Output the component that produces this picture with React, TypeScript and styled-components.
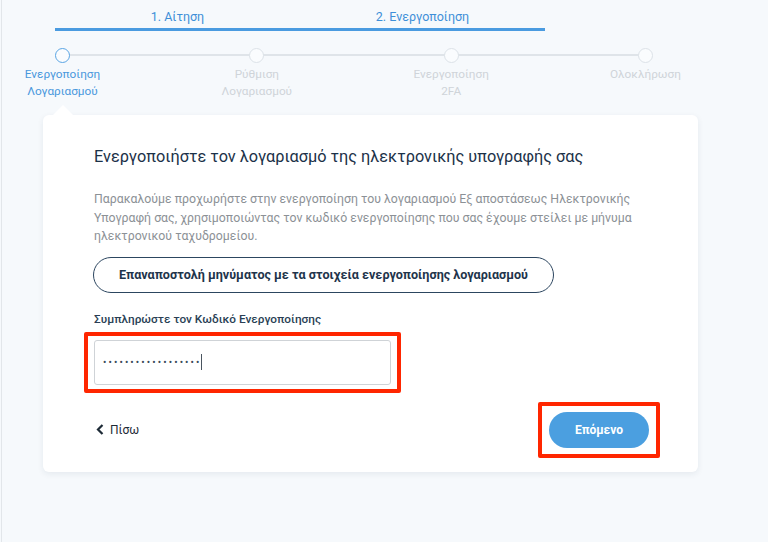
import React from "react"
import styled, { createGlobalStyle } from "styled-components"

// ■■■■■■■■■■■■■■■■■■■■■■■■■■■■■■■■■■■■■■■■■■■■■■■■■■■■■■■■■■■■■■■■■■■■■■■■■■■■■

const GlobalStyle = createGlobalStyle`
	html, body {
		margin: 0;
		padding: 0;
		background: #f6f9fc;
		font-family: "Roboto", "Liberation Sans", sans-serif;
	}
`

const phases = ["1. Αίτηση", "2. Ενεργοποίηση"]

const steps = [
	{ lines: ["Ενεργοποίηση", "Λογαριασμού"], active: true },
	{ lines: ["Ρύθμιση", "Λογαριασμού"], active: false },
	{ lines: ["Ενεργοποίηση", "2FA"], active: false },
	{ lines: ["Ολοκλήρωση"], active: false },
]

// ■■■■■■■■■■■■■■■■■■■■■■■■■■■■■■■■■■■■■■■■■■■■■■■■■■■■■■■■■■■■■■■■■■■■■■■■■■■■■

export default function App() {
	return (
		<>
			<GlobalStyle />
			<StyledPage>
				<StyledPhases>
					{phases.map((p) => (
						<StyledPhase key={p}>{p}</StyledPhase>
					))}
				</StyledPhases>

				<StyledStepper>
					{steps.map((s, i) => (
						<StyledStep key={i}>
							<StyledDot $active={s.active} />
							<StyledStepLabel $active={s.active}>
								{s.lines.map((l) => (
									<span key={l}>{l}</span>
								))}
							</StyledStepLabel>
						</StyledStep>
					))}
				</StyledStepper>

				<StyledCard>
					<StyledTitle>Ενεργοποιήστε τον λογαριασμό της ηλεκτρονικής υπογραφής σας</StyledTitle>
					<StyledText>
						Παρακαλούμε προχωρήστε στην ενεργοποίηση του λογαριασμού Εξ αποστάσεως Ηλεκτρονικής Υπογραφή σας,
						χρησιμοποιώντας τον κωδικό ενεργοποίησης που σας έχουμε στείλει με μήνυμα ηλεκτρονικού ταχυδρομείου.
					</StyledText>
					<StyledOutlineButton>Επαναποστολή μηνύματος με τα στοιχεία ενεργοποίησης λογαριασμού</StyledOutlineButton>

					<StyledLabel>Συμπληρώστε τον Κωδικό Ενεργοποίησης</StyledLabel>
					<StyledMarked $x={10} $y={8} $top={13}>
						<StyledInput>
							{"•".repeat(18)}
							<StyledCaret />
						</StyledInput>
					</StyledMarked>

					<StyledFooter>
						<StyledBack>
							<svg width="8" height="11" viewBox="0 0 8 11">
								<path d="M6.5 1 L2 5.5 L6.5 10" fill="none" stroke="#1d2a36" strokeWidth="2.2" />
							</svg>
							Πίσω
						</StyledBack>
						<StyledMarked $x={11} $y={10} $top={0}>
							<StyledPrimaryButton>Επόμενο</StyledPrimaryButton>
						</StyledMarked>
					</StyledFooter>
				</StyledCard>
			</StyledPage>
		</>
	)
}

// 〓〓〓〓〓〓〓〓〓〓〓〓〓〓〓〓〓〓〓〓〓〓〓〓〓〓〓〓〓〓	STYLED_COMPONENTS

const StyledPage = styled.div`
	min-height: 542px;
	box-sizing: border-box;
	border-left: 1px solid #e2e6ea;
	margin-left: 1px;
	padding-top: 8px;
`

const StyledPhases = styled.div`
	display: grid;
	grid-template-columns: 245px 245px;
	margin-left: 53px;
	width: 490px;
	border-bottom: 3px solid #4a9be0;
`

const StyledPhase = styled.div`
	text-align: center;
	font-size: 12.5px;
	line-height: 17px;
	padding-bottom: 3px;
	color: #3e8fd8;
`

const StyledStepper = styled.div`
	position: relative;
	display: flex;
	justify-content: space-between;
	margin: 17px 0 0 53px;
	width: 598px;

	&::before {
		content: "";
		position: absolute;
		left: 7px;
		right: 7px;
		top: 6px;
		height: 2px;
		background: #dfe4e9;
	}
`

const StyledStep = styled.div`
	position: relative;
	width: 15px;
	display: flex;
	flex-direction: column;
	align-items: center;
`

const StyledDot = styled.div<{ $active: boolean }>`
	width: 15px;
	height: 15px;
	box-sizing: border-box;
	border-radius: 50%;
	background: #fafcfe;
	border: 1.5px solid ${(p) => (p.$active ? "#5aa5e4" : "#dce2e8")};
`

const StyledStepLabel = styled.div<{ $active: boolean }>`
	display: flex;
	flex-direction: column;
	align-items: center;
	white-space: nowrap;
	margin-top: 3px;
	font-size: 11.8px;
	line-height: 17px;
	color: ${(p) => (p.$active ? "#4a98dc" : "#cfd4d9")};
`

const StyledCard = styled.div`
	position: relative;
	margin: 15px 0 0 41px;
	width: 655px;
	height: 357px;
	box-sizing: border-box;
	padding: 30px 40px 0 51px;
	background: #fff;
	border-radius: 6px;
	box-shadow: 0 2px 6px rgba(30, 50, 80, 0.08);
	display: flex;
	flex-direction: column;
	align-items: flex-start;

	&::before {
		content: "";
		position: absolute;
		top: -10px;
		left: 10px;
		border-left: 10px solid transparent;
		border-right: 10px solid transparent;
		border-bottom: 10px solid #fff;
	}
`

const StyledTitle = styled.h2`
	margin: 0;
	font-size: 16.3px;
	line-height: 24px;
	font-weight: 400;
	color: #1b3148;
`

const StyledText = styled.p`
	margin: 21px 0 0;
	font-size: 12.3px;
	line-height: 18.5px;
	color: #8c9196;
	max-width: 545px;
`

const StyledOutlineButton = styled.button`
	margin: 11px 0 0 -1px;
	height: 36px;
	padding: 0 25px;
	border: 1.2px solid #2c4660;
	border-radius: 18px;
	background: #fff;
	font-family: inherit;
	font-size: 12.6px;
	font-weight: 700;
	color: #1e344b;
`

const StyledLabel = styled.div`
	margin-top: 18px;
	font-size: 11.8px;
	line-height: 16px;
	font-weight: 500;
	color: #2a3f55;
`

const StyledMarked = styled.div<{ $x: number; $y: number; $top: number }>`
	position: relative;
	margin-top: ${(p) => p.$top}px;

	&::after {
		content: "";
		position: absolute;
		inset: ${(p) => `-${p.$y}px -${p.$x}px`};
		border: 4px solid #ff2600;
		border-radius: 2px;
		pointer-events: none;
	}
`

const StyledInput = styled.div`
	display: flex;
	align-items: center;
	width: 297px;
	height: 45px;
	box-sizing: border-box;
	padding: 0 8px;
	border: 1px solid #cfd3d7;
	border-radius: 3px;
	font-size: 10px;
	letter-spacing: 2.1px;
	color: #3a4a5a;
`

const StyledCaret = styled.span`
	width: 1px;
	height: 16px;
	margin-left: -1px;
	background: #4a5560;
`

const StyledFooter = styled.div`
	align-self: stretch;
	display: flex;
	justify-content: space-between;
	align-items: center;
	margin-top: 27px;
	padding-right: 9px;
`

const StyledBack = styled.a`
	display: flex;
	align-items: center;
	gap: 6px;
	margin-left: 2px;
	font-size: 12px;
	color: #1d2a36;
`

const StyledPrimaryButton = styled.button`
	display: block;
	width: 100px;
	height: 36px;
	border: none;
	border-radius: 18px;
	background: #4b9fe0;
	color: #fff;
	font-family: inherit;
	font-size: 12px;
	font-weight: 700;
`
